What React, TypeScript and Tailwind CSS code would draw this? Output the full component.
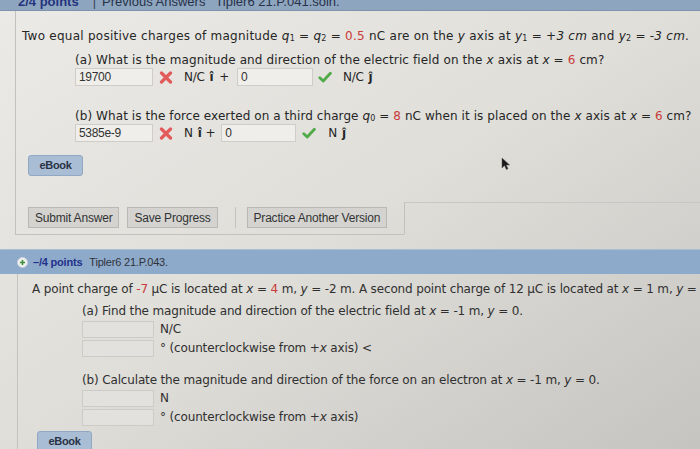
import React from "react";

const red = "text-[#c93a3a]";

function XMark() {
  return (
    <svg width="14" height="13" viewBox="0 0 14 13" className="shrink-0">
      <path d="M2.5 2 L11.5 11 M11.5 2 L2.5 11" stroke="#e25a5a" strokeWidth="3.2" strokeLinecap="round" />
    </svg>
  );
}

function Check() {
  return (
    <svg width="14" height="12" viewBox="0 0 14 12" className="shrink-0">
      <path d="M1.8 6.8 L5.2 10 L12.4 2.2" stroke="#4faa47" strokeWidth="2.8" fill="none" strokeLinecap="round" strokeLinejoin="round" />
    </svg>
  );
}

function Var({ n, s }: { n: string; s?: string }) {
  return (
    <span className="italic">
      {n}
      {s && <sub className="text-[8px] not-italic relative -bottom-[1px]">{s}</sub>}
    </span>
  );
}

function Field({ w, val }: { w: string; val?: string }) {
  return (
    <div
      className={`${w} h-[18px] bg-[#efeeea] border border-[#cfcdc8] flex items-center pl-[3px] text-[12px] text-[#333] font-['Liberation_Sans',Arial,sans-serif]`}
    >
      {val}
    </div>
  );
}

function GrayButton({ label }: { label: string }) {
  return (
    <div className="h-[21px] px-[6px] flex items-center bg-[#d4d3d0] border border-[#b9b8b4] text-[12px] text-[#333] font-['Liberation_Sans',Arial,sans-serif] tracking-[-0.2px]">
      {label}
    </div>
  );
}

function EBook({ cls }: { cls: string }) {
  return (
    <div
      className={`${cls} w-[55px] h-[21px] flex items-center justify-center rounded-[3px] bg-[#a9bdd5] border border-[#91a8c4] text-[11px] font-bold text-[#2a3345] font-['Liberation_Sans',Arial,sans-serif] tracking-[-0.3px]`}
    >
      eBook
    </div>
  );
}

function EmptyBox() {
  return <div className="w-[72px] h-[17px] bg-[#e2e1dd] border border-[#cdcbc6]" />;
}

export default function App() {
  return (
    <div className="relative w-[700px] h-[449px] overflow-hidden bg-linear-to-br from-[#ebeae6] via-[#dfded9] to-[#c6c4c0] font-['DejaVu_Sans',Verdana,sans-serif] text-[#262626]">
      {/* top bar (cut off by the photo's edge) */}
      <div className="h-[11px] overflow-hidden bg-[#8ea5bf] border-b border-[#7d93ad]">
        <div className="-mt-[6px] flex items-center whitespace-nowrap text-[13px] leading-[16px] font-['Liberation_Sans',Arial,sans-serif] text-[#27324a]">
          <span className="ml-[18px] font-bold text-[#24347e]">2/4 points</span>
          <span className="ml-[14px] text-[#3b4660]">|</span>
          <span className="ml-[6px]">Previous Answers</span>
          <span className="ml-[10px]">Tipler6 21.P.041.soln.</span>
        </div>
      </div>

      {/* panel 1 */}
      <div className="ml-[15px] border-l border-[#c2c1bd]">
        <div className="pl-[6px] pt-[17px] text-[12px] leading-[16px] tracking-[0.25px] whitespace-nowrap">
          Two equal positive charges of magnitude <Var n="q" s="1" /> = <Var n="q" s="2" /> ={" "}
          <span className={red}>0.5</span> nC are on the <Var n="y" /> axis at <Var n="y" s="1" /> ={" "}
          <span className="italic">+3 cm</span> and <Var n="y" s="2" /> = <span className="italic">-3 cm</span>.
        </div>

        <div className="pl-[59px]">
          <div className="mt-[8px] text-[12px] leading-[16px] tracking-[0.12px] whitespace-nowrap">
            (a) What is the magnitude and direction of the electric field on the <Var n="x" /> axis at{" "}
            <Var n="x" /> = <span className={red}>6</span> cm?
          </div>
          <div className="flex items-center h-[18px] text-[12px] tracking-[-0.3px]">
            <Field w="w-[78px]" val="19700" />
            <div className="ml-[6px]"><XMark /></div>
            <span className="ml-[11px]">N/C</span>
            <b className="ml-[5px]">î</b>
            <span className="ml-[6px]">+</span>
            <div className="ml-[8px]"><Field w="w-[76px]" val="0" /></div>
            <div className="ml-[5px]"><Check /></div>
            <span className="ml-[11px]">N/C</span>
            <b className="ml-[5px]">ĵ</b>
          </div>

          <div className="mt-[22px] text-[12px] leading-[16px] tracking-[0.08px] whitespace-nowrap">
            (b) What is the force exerted on a third charge <Var n="q" s="0" /> ={" "}
            <span className={red}>8</span> nC when it is placed on the <Var n="x" /> axis at <Var n="x" /> ={" "}
            <span className={red}>6</span> cm?
          </div>
          <div className="flex items-center h-[18px] text-[12px] tracking-[-0.3px]">
            <Field w="w-[78px]" val="5385e-9" />
            <div className="ml-[6px]"><XMark /></div>
            <span className="ml-[11px]">N</span>
            <b className="ml-[5px]">î</b>
            <span className="ml-[4px]">+</span>
            <div className="ml-[6px]"><Field w="w-[75px]" val="0" /></div>
            <div className="ml-[6px]"><Check /></div>
            <span className="ml-[12px]">N</span>
            <b className="ml-[5px]">ĵ</b>
          </div>
        </div>

        <EBook cls="ml-[12px] mt-[13px]" />

        <div className="mt-[26px] flex">
          <div className="w-[389px] h-[33px] border-b border-r border-[#c2c1bd] rounded-br-[2px] flex items-start pt-[5px] pl-[12px]">
            <GrayButton label="Submit Answer" />
            <div className="ml-[8px]"><GrayButton label="Save Progress" /></div>
            <div className="ml-[17px] w-px h-[21px] bg-[#c4c3bf]" />
            <div className="ml-[11px]"><GrayButton label="Practice Another Version" /></div>
          </div>
          <div className="flex-1 h-[33px] border-t border-[#c8c7c3]" />
        </div>
      </div>

      {/* header 2 */}
      <div className="mt-[14px] h-[25px] bg-[#8eaaca] border-t border-[#a9bfd6] flex items-center whitespace-nowrap font-['Liberation_Sans',Arial,sans-serif] text-[11px]">
        <div className="ml-[17px] w-[11px] h-[11px] rounded-full bg-[#eef0ee] border border-[#c9d3dc] flex items-center justify-center">
          <svg width="7" height="7" viewBox="0 0 7 7">
            <path d="M3.5 1 V6 M1 3.5 H6" stroke="#3f8f3a" strokeWidth="1.6" />
          </svg>
        </div>
        <span className="ml-[5px] font-bold text-[#23328a] tracking-[-0.2px]">–/4 points</span>
        <span className="ml-[7px] text-[#2e333b] tracking-[-0.2px]">Tipler6 21.P.043.</span>
      </div>

      {/* panel 2 */}
      <div className="ml-[17px] border-l border-[#c4c3bf] h-[200px] text-[#303030]">
        <div className="pl-[14px] pt-[7px] text-[12px] leading-[16px] tracking-[-0.15px] whitespace-nowrap">
          A point charge of <span className={red}>-7</span> μC is located at <Var n="x" /> ={" "}
          <span className={red}>4</span> m, <Var n="y" /> = -2 m. A second point charge of 12 μC is located at{" "}
          <Var n="x" /> = 1 m, <Var n="y" /> = 2 m.
        </div>
        <div className="pl-[64px]">
          <div className="mt-[6px] text-[12px] leading-[16px] tracking-[-0.15px] whitespace-nowrap">
            (a) Find the magnitude and direction of the electric field at <Var n="x" /> = -1 m, <Var n="y" /> = 0.
          </div>
          <div className="mt-[1px] flex flex-col gap-[1px] text-[12px] tracking-[-0.15px]">
            <div className="flex items-center">
              <EmptyBox />
              <span className="ml-[6px]">N/C</span>
            </div>
            <div className="flex items-center">
              <EmptyBox />
              <span className="ml-[6px]">° (counterclockwise from +<i>x</i> axis) &lt;</span>
            </div>
          </div>

          <div className="mt-[15px] text-[12px] leading-[16px] tracking-[-0.15px] whitespace-nowrap">
            (b) Calculate the magnitude and direction of the force on an electron at <Var n="x" /> = -1 m,{" "}
            <Var n="y" /> = 0.
          </div>
          <div className="mt-[1px] flex flex-col gap-[1px] text-[12px] tracking-[-0.15px]">
            <div className="flex items-center">
              <EmptyBox />
              <span className="ml-[6px]">N</span>
            </div>
            <div className="flex items-center">
              <EmptyBox />
              <span className="ml-[6px]">° (counterclockwise from +<i>x</i> axis)</span>
            </div>
          </div>
        </div>
        <EBook cls="ml-[19px] mt-[5px] w-[51px]" />
      </div>

      {/* mouse pointer */}
      <svg className="absolute left-[501px] top-[157px]" width="10" height="14" viewBox="0 0 10 14">
        <path d="M1 1 L1 11 L3.5 8.6 L5.4 12.6 L7 11.8 L5.2 8 L8.6 8 Z" fill="#1a1a1a" stroke="#555" strokeWidth="0.5" />
      </svg>
    </div>
  );
}
